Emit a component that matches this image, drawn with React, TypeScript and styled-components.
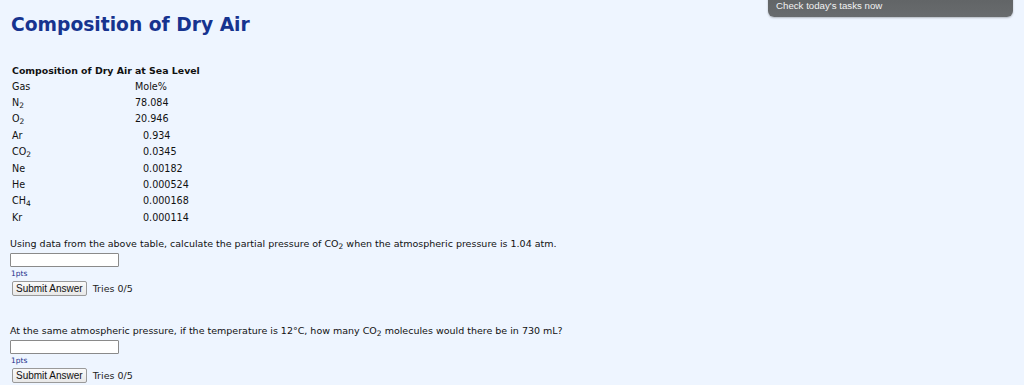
import React from "react";
import styled, { createGlobalStyle } from "styled-components";

const GlobalStyle = createGlobalStyle`
  html, body {
    margin: 0;
    padding: 0;
    background: #eef5ff;
  }
  body {
    font-family: Verdana, "DejaVu Sans", sans-serif;
    color: #111;
  }
`;

type Row = { gas: string; sub?: string; value: string; indent?: boolean };

const rows: Row[] = [
  { gas: "N", sub: "2", value: "78.084" },
  { gas: "O", sub: "2", value: "20.946" },
  { gas: "Ar", value: "0.934", indent: true },
  { gas: "CO", sub: "2", value: "0.0345", indent: true },
  { gas: "Ne", value: "0.00182", indent: true },
  { gas: "He", value: "0.000524", indent: true },
  { gas: "CH", sub: "4", value: "0.000168", indent: true },
  { gas: "Kr", value: "0.000114", indent: true },
];

const App = () => {
  return (
    <Page>
      <GlobalStyle />
      <Toast>Check today's tasks now</Toast>
      <Title>Composition of Dry Air</Title>

      <Table>
        <Caption>Composition of Dry Air at Sea Level</Caption>
        <TableRow>
          <GasCell>Gas</GasCell>
          <ValueCell>Mole%</ValueCell>
        </TableRow>
        {rows.map((r) => (
          <TableRow key={r.gas}>
            <GasCell>
              {r.gas}
              {r.sub && <Sub>{r.sub}</Sub>}
            </GasCell>
            <ValueCell indent={r.indent}>{r.value}</ValueCell>
          </TableRow>
        ))}
      </Table>

      <Question>
        <Prompt>
          Using data from the above table, calculate the partial pressure of CO
          <Sub>2</Sub> when the atmospheric pressure is 1.04 atm.
        </Prompt>
        <AnswerInput type="text" />
        <Points>1pts</Points>
        <SubmitRow>
          <SubmitButton>Submit Answer</SubmitButton>
          <Tries>Tries 0/5</Tries>
        </SubmitRow>
      </Question>

      <Question second>
        <Prompt>
          At the same atmospheric pressure, if the temperature is 12°C, how many
          CO<Sub>2</Sub> molecules would there be in 730 mL?
        </Prompt>
        <AnswerInput type="text" />
        <Points>1pts</Points>
        <SubmitRow>
          <SubmitButton>Submit Answer</SubmitButton>
          <Tries>Tries 0/5</Tries>
        </SubmitRow>
      </Question>
    </Page>
  );
};

const Page = styled.div`
  position: relative;
  width: 1024px;
  height: 385px;
  overflow: hidden;
  padding: 14px 10px 0;
  box-sizing: border-box;
`;

const Toast = styled.div`
  position: absolute;
  top: -8px;
  left: 768px;
  width: 245px;
  height: 25px;
  box-sizing: border-box;
  padding: 8px 8px 0;
  border-radius: 6px;
  background: linear-gradient(#5f6264, #686b6d);
  box-shadow: 0 1px 2px rgba(0, 0, 0, 0.25);
  color: #f2f2f2;
  font-family: "Liberation Sans", Arial, sans-serif;
  font-size: 9.7px;
  line-height: 11px;
`;

const Title = styled.h1`
  margin: 0 0 0 1px;
  font-size: 18.7px;
  line-height: 22px;
  font-weight: bold;
  color: #16338f;
`;

const Table = styled.div`
  margin-top: 28px;
  margin-left: 2px;
  display: flex;
  flex-direction: column;
  font-size: 9.6px;
`;

const Caption = styled.div`
  font-weight: bold;
  font-size: 9.4px;
  line-height: 14px;
`;

const TableRow = styled.div`
  display: flex;
  height: 16.4px;
  align-items: center;
`;

const GasCell = styled.div`
  width: 123px;
`;

const ValueCell = styled.div<{ indent?: boolean }>`
  padding-left: ${(p) => (p.indent ? "8px" : "0")};
`;

const Sub = styled.sub`
  font-size: 7.5px;
  vertical-align: -2px;
  line-height: 0;
`;

const Question = styled.div<{ second?: boolean }>`
  margin-top: ${(p) => (p.second ? "28px" : "11px")};
  display: flex;
  flex-direction: column;
  align-items: flex-start;
`;

const Prompt = styled.div`
  font-size: 9.5px;
  line-height: 14px;
`;

const AnswerInput = styled.input`
  margin-top: 2px;
  width: 109px;
  height: 14px;
  box-sizing: border-box;
  border: 1px solid #8a8a8a;
  border-radius: 1px;
  background: #fff;
  padding: 0;
`;

const Points = styled.div`
  margin-top: 2px;
  margin-left: 1px;
  font-size: 7.5px;
  line-height: 9px;
  color: #1a2f8a;
`;

const SubmitRow = styled.div`
  margin-top: 3px;
  margin-left: 2px;
  display: flex;
  align-items: center;
  gap: 6px;
`;

const SubmitButton = styled.button`
  height: 15px;
  padding: 0 3px;
  border: 1px solid #9a9a9a;
  border-radius: 2px;
  background: linear-gradient(#fafafa, #e8e8e8);
  font-family: "Liberation Sans", Arial, sans-serif;
  font-size: 10px;
  line-height: 13px;
  color: #111;
`;

const Tries = styled.span`
  font-size: 9.5px;
  color: #222;
`;

export default App;
